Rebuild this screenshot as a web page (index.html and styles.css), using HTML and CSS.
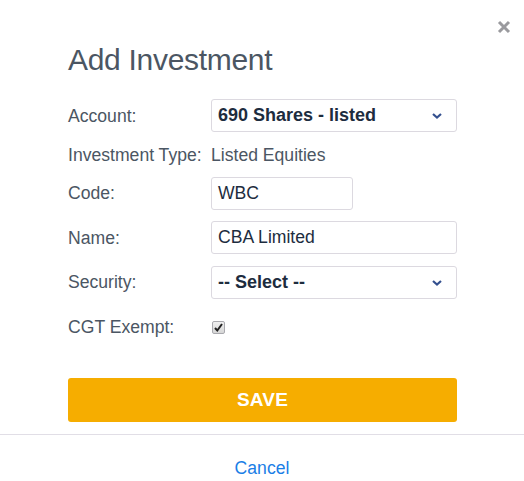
FILE: index.html
```html
<!DOCTYPE html>
<html lang="en">
<head>
<meta charset="utf-8">
<title>Add Investment</title>
<link rel="stylesheet" href="styles.css">
</head>
<body>
<div class="modal">
  <button class="close" aria-label="Close">
    <svg width="14" height="14" viewBox="0 0 14 14"><path d="M2 2 L12 12 M12 2 L2 12" stroke="#9a9a9e" stroke-width="3" stroke-linecap="butt"/></svg>
  </button>
  <div class="content">
    <h1 class="title">Add Investment</h1>
    <div class="form">
      <div class="label">Account:</div>
      <div class="field select bold"><span>690 Shares - listed</span>
        <svg class="chev" width="10" height="6" viewBox="0 0 10 6"><path d="M1 1 L5 4.5 L9 1" fill="none" stroke="#34508f" stroke-width="2.2"/></svg>
      </div>

      <div class="label short">Investment Type:</div>
      <div class="value short">Listed Equities</div>

      <div class="label">Code:</div>
      <div class="field code"><span>WBC</span></div>

      <div class="label">Name:</div>
      <div class="field"><span>CBA Limited</span></div>

      <div class="label">Security:</div>
      <div class="field select bold"><span>-- Select --</span>
        <svg class="chev" width="10" height="6" viewBox="0 0 10 6"><path d="M1 1 L5 4.5 L9 1" fill="none" stroke="#34508f" stroke-width="2.2"/></svg>
      </div>

      <div class="label">CGT Exempt:</div>
      <div class="checkrow"><span class="checkbox"><svg width="11" height="11" viewBox="0 0 11 11"><path d="M2 6 L4.3 8.5 L9 2" fill="none" stroke="#222" stroke-width="2"/></svg></span></div>
    </div>
    <button class="save">SAVE</button>
  </div>
  <div class="footer">
    <a class="cancel" href="#">Cancel</a>
  </div>
</div>
</body>
</html>
```

FILE: styles.css
```css
html, body {
  margin: 0;
  padding: 0;
  background: #ffffff;
}
body {
  font-family: "Liberation Sans", Arial, sans-serif;
  color: #4b5663;
}
.modal {
  position: relative;
  width: 524px;
  min-height: 481px;
}
.close {
  position: absolute;
  top: 20px;
  right: 13px;
  width: 14px;
  height: 14px;
  padding: 0;
  border: 0;
  background: transparent;
  display: flex;
}
.content {
  padding: 42px 67px 0 68px;
  width: 389px;
}
.title {
  margin: 0;
  font-size: 30px;
  font-weight: normal;
  line-height: 36px;
  letter-spacing: -0.3px;
  color: #4b5663;
}
.form {
  margin-top: 21px;
  display: grid;
  grid-template-columns: 143px 246px;
  row-gap: 11.5px;
  align-items: center;
  font-size: 17.6px;
}
.label {
  line-height: 22px;
  color: #4b5663;
}
.value {
  line-height: 22px;
  color: #4b5663;
}
.short {
  height: 21.5px;
}
.field {
  box-sizing: border-box;
  height: 33px;
  border: 1px solid #dcd9e0;
  border-radius: 3px;
  padding: 0 14px 0 6px;
  display: flex;
  align-items: center;
  justify-content: space-between;
  color: #1d2c3e;
  font-size: 17.6px;
}
.field.bold {
  font-weight: bold;
  font-size: 18px;
}
.field.code {
  width: 142px;
}
.chev {
  display: block;
  margin-top: 1px;
}
.checkrow {
  height: 34px;
  display: flex;
  align-items: center;
}
.checkbox {
  box-sizing: border-box;
  width: 13px;
  height: 13px;
  border: 1px solid #a9a9ae;
  border-radius: 2px;
  background: linear-gradient(#f0f0f0, #d6d6d6);
  display: flex;
  align-items: center;
  justify-content: center;
  margin-left: 1px;
}
.save {
  display: block;
  box-sizing: border-box;
  width: 389px;
  height: 44px;
  margin-top: 34px;
  border: 0;
  border-radius: 3px;
  background: #f6ad00;
  color: #ffffff;
  font-family: "Liberation Sans", Arial, sans-serif;
  font-weight: bold;
  font-size: 19px;
  letter-spacing: 0.2px;
  padding: 0;
}
.footer {
  margin-top: 12px;
  border-top: 1px solid #e1dee6;
  padding-top: 22px;
  text-align: center;
}
.cancel {
  font-size: 17.6px;
  line-height: 22px;
  color: #1a7ee6;
  text-decoration: none;
}
```
